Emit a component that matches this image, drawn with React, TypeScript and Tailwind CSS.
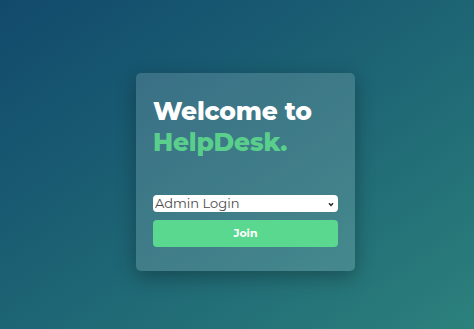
import React from "react";

const App = () => {
  return (
    <div className="w-full h-[329px] overflow-hidden bg-gradient-to-br from-[#124a6c] via-[#1d6474] to-[#2c817c] pl-[136px] pt-[73px] font-['Montserrat','Inter',sans-serif]">
      <div className="w-[219px] h-[198px] rounded-[5px] bg-white/15 shadow-[0_6px_20px_rgba(0,0,0,0.3)] px-[17px] pt-[23px] pb-[24px] flex flex-col">
        <h1 className="text-[25px] leading-[31px] font-extrabold text-white tracking-[-0.2px]">
          Welcome to
          <br />
          <span className="text-[#5acf8c]">HelpDesk.</span>
        </h1>
        <div className="mt-auto flex flex-col gap-[8px]">
          <div className="relative h-[17px]">
            <select className="block appearance-none h-[17px] w-full rounded-[4px] bg-white text-[13px] leading-[17px] py-0 text-[#4a4a4a] pl-[2px] pr-[14px]">
              <option>Admin Login</option>
              <option>User Login</option>
            </select>
            <svg
              className="absolute right-[4px] top-[7px] pointer-events-none"
              width="6"
              height="5"
              viewBox="0 0 6 5"
            >
              <path d="M1 1.2 L3 3.4 L5 1.2" fill="none" stroke="#222" strokeWidth="1.4" />
            </svg>
          </div>
          <button className="h-[27px] w-full rounded-[4px] bg-[#5bd88f] text-white text-[11px] font-bold">
            Join
          </button>
        </div>
      </div>
    </div>
  );
};

export default App;
